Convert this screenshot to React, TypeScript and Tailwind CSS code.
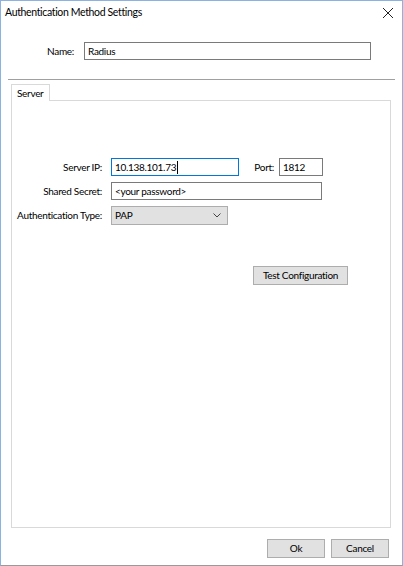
import React from "react";

const Field = ({ value, width, focused }: { value: string; width: string; focused?: boolean }) => (
  <div
    className={`${width} h-[18px] border ${focused ? "border-[#0078d7]" : "border-[#7a7a7a]"} bg-white flex items-center px-[3px] text-black whitespace-nowrap`}
  >
    {value}
    {focused && <span className="ml-[1px] w-px h-[13px] bg-black" />}
  </div>
);

const Label = ({ children }: { children: React.ReactNode }) => (
  <span className="w-[90px] shrink-0 text-right text-black whitespace-nowrap">{children}</span>
);

const Button = ({ children, width }: { children: React.ReactNode; width: string }) => (
  <div
    className={`${width} h-[19px] border border-[#adadad] bg-[#e1e1e1] flex items-center justify-center text-black whitespace-nowrap`}
  >
    {children}
  </div>
);

export default function App() {
  return (
    <div
      className="w-[403px] h-[566px] bg-white border-x border-t border-x-[#8cb2df] border-t-[#8cb2df] border-b border-b-[#9a9a9a] flex flex-col text-[10px] tracking-[-0.3px]"
      style={{ fontFamily: 'Lato, "Noto Sans", sans-serif' }}
    >
      {/* title bar */}
      <div className="h-[24px] flex items-center justify-between pl-[4px] pr-[8px]">
        <span className="text-[10.5px] tracking-[-0.35px] text-black">Authentication Method Settings</span>
        <svg width="12" height="12" viewBox="0 0 12 12" className="text-[#222]">
          <path d="M1 1 L11 11 M11 1 L1 11" stroke="currentColor" strokeWidth="1" />
        </svg>
      </div>

      {/* name row */}
      <div className="mt-[17px] flex items-center">
        <span className="w-[73px] text-right text-black">Name:</span>
        <div className="ml-[10px]">
          <Field value="Radius" width="w-[287px]" />
        </div>
      </div>

      <div className="mt-[19px] mx-[7px] border-t border-[#a0a0a0]" />

      {/* tabs */}
      <div className="mt-[4px] ml-[10px] mr-[11px] flex flex-col flex-1">
        <div className="flex">
          <div className="h-[17px] w-[39px] border-x border-t border-[#d9d9d9] bg-white flex items-center pl-[5px] text-black -mb-px relative z-10">
            Server
          </div>
        </div>
        <div className="h-[428px] border border-[#d9d9d9] flex flex-col">
          <div className="mt-[57px] flex items-center">
            <Label>Server IP:</Label>
            <div className="ml-[9px]">
              <Field value="10.138.101.73" width="w-[128px]" focused />
            </div>
            <span className="w-[40px] pr-[5px] text-right text-black">Port:</span>
            <Field value="1812" width="w-[44px]" />
          </div>
          <div className="mt-[6px] flex items-center">
            <Label>Shared Secret:</Label>
            <div className="ml-[9px]">
              <Field value="<your password>" width="w-[211px]" />
            </div>
          </div>
          <div className="mt-[6px] flex items-center">
            <Label>Authentication Type:</Label>
            <div className="ml-[9px] w-[117px] h-[19px] border border-[#adadad] bg-[#e1e1e1] flex items-center justify-between pl-[3px] pr-[6px] text-black">
              PAP
              <svg width="8" height="5" viewBox="0 0 8 5">
                <path d="M0.5 0.5 L4 4 L7.5 0.5" fill="none" stroke="#444" strokeWidth="1" />
              </svg>
            </div>
          </div>
          <div className="mt-[41px] flex pl-[241px]">
            <Button width="w-[95px]">Test Configuration</Button>
          </div>
        </div>
      </div>

      {/* footer buttons */}
      <div className="h-[37px] flex items-start justify-end gap-[6px] pr-[13px] pt-[11px]">
        <Button width="w-[58px]">Ok</Button>
        <Button width="w-[58px]">Cancel</Button>
      </div>
    </div>
  );
}
